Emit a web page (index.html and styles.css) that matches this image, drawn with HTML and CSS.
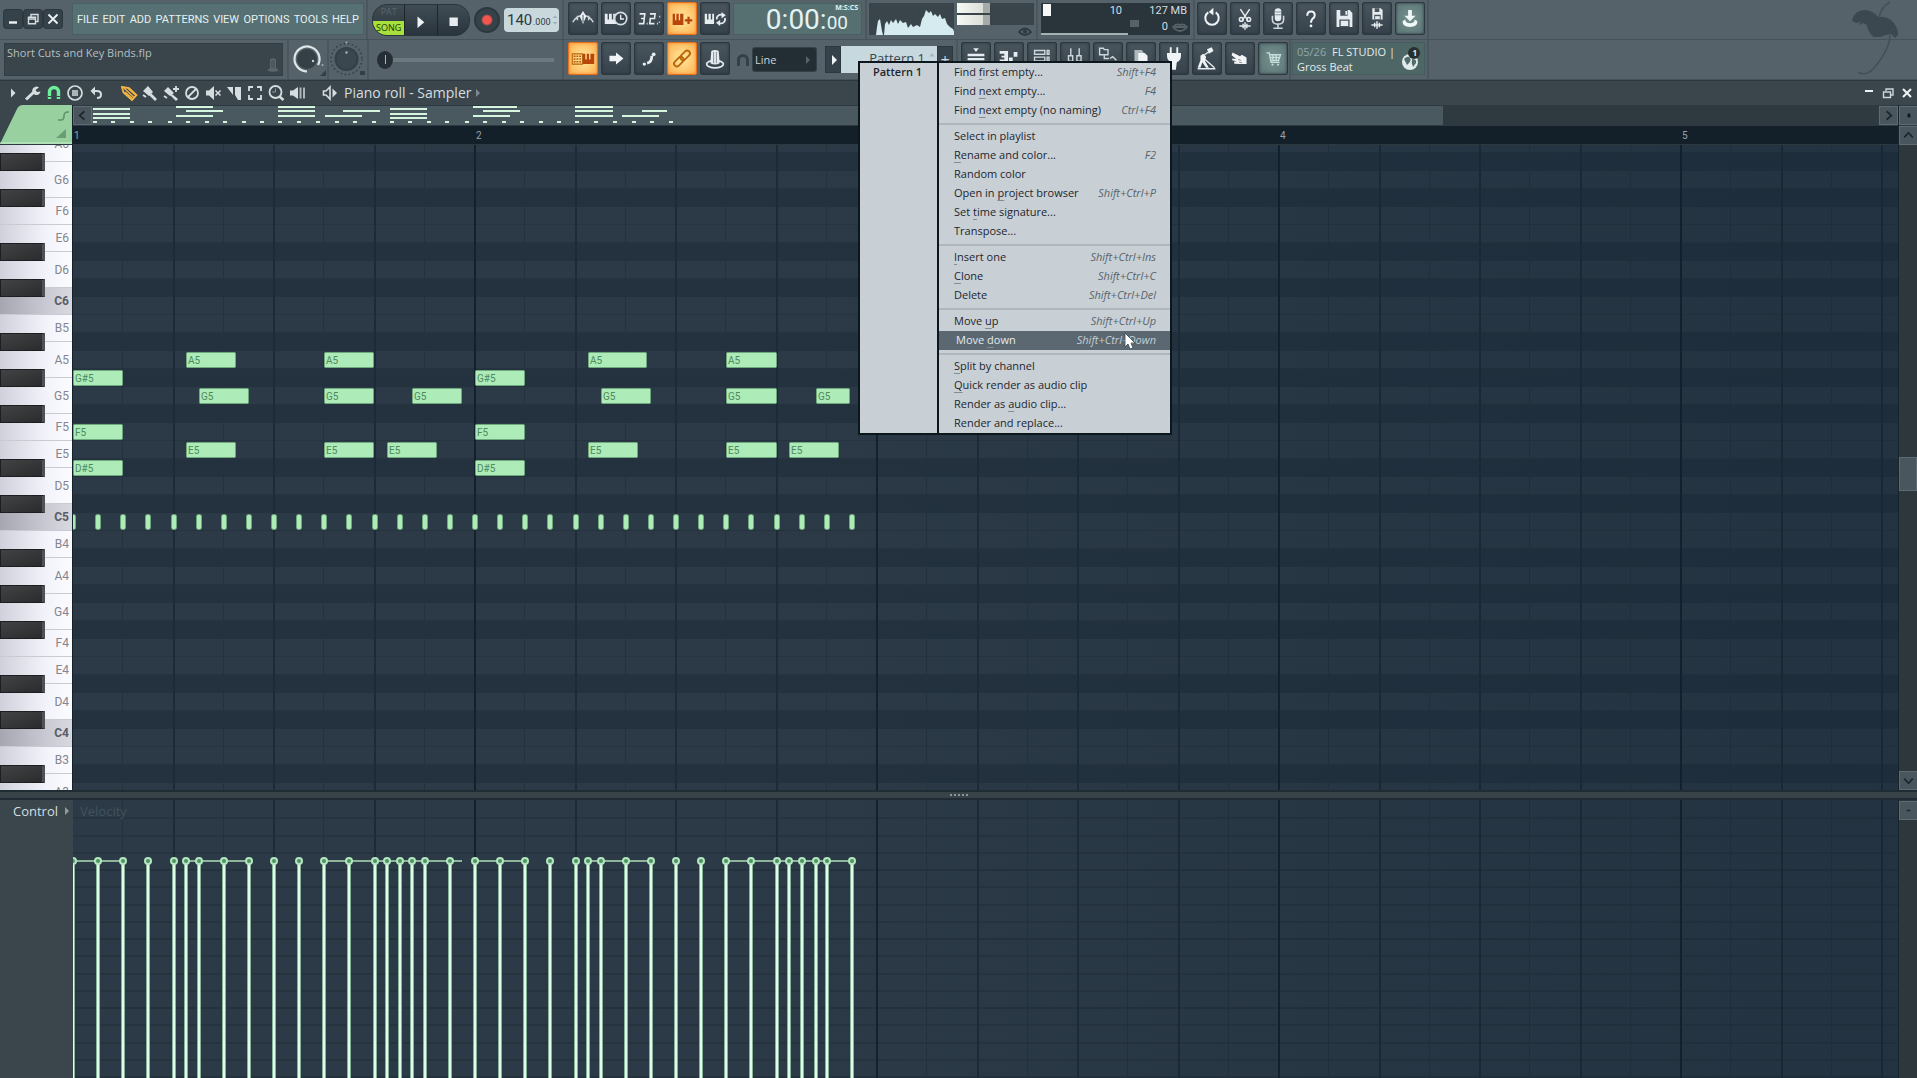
FILE: index.html
```html
<!DOCTYPE html>
<html lang="en">
<head>
    <meta charset="UTF-8">
    <meta name="viewport" content="width=device-width, initial-scale=1.0">
    <title>Short Cuts and Key Binds.flp</title>
    <link rel="stylesheet" href="styles.css">
</head>
<body>
    <header class="toolbar">
        <div class="toolbar-row">
            <div class="panel window-panel">
                <button class="win-button" aria-label="Minimize"><svg viewBox="0 0 18 18"><path d="M5 12.5h8" stroke="#eef3f5" stroke-width="2.4"/></svg></button>
                <button class="win-button" aria-label="Restore"><svg viewBox="0 0 18 18" fill="none" stroke="#d5dde0" stroke-width="1.4"><path d="M7 7V4.500h7v7h-2.500M4.500 7.200h7v6.500h-7zM4.500 9h7"/></svg></button>
                <button class="win-button" aria-label="Close"><svg viewBox="0 0 18 18"><path d="M4.500 4.500l9 9M13.500 4.500l-9 9" stroke="#eef3f5" stroke-width="1.800"/></svg></button>
            </div>
            <nav class="main-menu" aria-label="Main menu">
                <button>FILE</button><button>EDIT</button><button>ADD</button><button>PATTERNS</button><button>VIEW</button><button>OPTIONS</button><button>TOOLS</button><button>HELP</button>
            </nav>
            <div class="panel transport-panel">
                <div class="transport">
                    <button class="mode-button"><span class="mode-off">PAT</span><span class="mode-on">SONG</span></button>
                    <button aria-label="Play"><svg viewBox="0 0 30 32"><path d="M12 11l6.500 5.500L12 22z" fill="#f0f4f6"/></svg></button>
                    <button aria-label="Stop"><svg viewBox="0 0 30 32"><path d="M11 12h8v8h-8z" fill="#e6ecef"/></svg></button>
                </div>
                <button class="record" aria-label="Record"></button>
                <label class="tempo"><input type="text" value="140" aria-label="Tempo"><span>.000</span><svg viewBox="0 0 6 12"><path d="M0.500 4L3 1.500 5.500 4zM0.500 8L3 10.500 5.500 8z" fill="#9fb0b7"/></svg></label>
            </div>
            <div class="panel tool-panel">
                <div class="tool-group">
                    <button class="tool" aria-label="Metronome"><svg viewBox="0 0 30 32"><path d="M4 20c2-4 6-7 9-7M26 20c-2-4-6-7-9-7M9 13v5M21 13v5" fill="none" stroke="#cdd6da" stroke-width="1.600"/><path d="M15 8l3.500 5.500L15 22l-3.500-8.500z" fill="#f0f4f6"/><path d="M15 12v8" stroke="#3a464f"/></svg></button>
                    <button class="tool" aria-label="Wait for input"><svg viewBox="0 0 30 32"><path d="M3 11h3v6h1.500v-6h3v6H12v-6h3v11H3z" fill="#e6ecef"/><circle cx="20" cy="16" r="6.500" fill="#36424b" stroke="#d5dde0" stroke-width="1.800"/><path d="M20 12v4.500h3.500" fill="none" stroke="#e6ecef" stroke-width="1.500"/></svg></button>
                    <button class="tool" aria-label="Countdown"><svg viewBox="0 0 30 32" fill="none" stroke="#e6ecef" stroke-width="1.700"><path d="M5 11h5.500l-.6 5H6.500M9.900 16l-.6 5.500H4M12.500 21.500h1M16 11h5.500l-.6 5h-4.500l-.6 5.500h5M23.500 21.500h1"/><path d="M26 14h1M25.500 20h1"/></svg></button>
                    <button class="tool lit" aria-label="Overdub"><svg viewBox="0 0 30 32"><path d="M5 11h2.500v7H9v-7h2.500v7H13v-7h3.500v12H5z" fill="#b8460a"/><path d="M18 18h8M22 14v8" stroke="#b8460a" stroke-width="2.400"/></svg></button>
                    <button class="tool" aria-label="Loop record"><svg viewBox="0 0 30 32"><path d="M4 11h2.500v6H8v-6h2.500v6H12v-6h2v11H4z" fill="#e6ecef"/><path d="M17 17a4.300 4.300 0 0 1 6.500-4.500M25.500 15.500a4.300 4.300 0 0 1-6.500 5" fill="none" stroke="#e6ecef" stroke-width="1.800"/><path d="M22 9l4.500 3.500L22 16zM20.500 17.500L16 20.500l4.500 3.500z" fill="#e6ecef"/></svg></button>
                </div>
            </div>
            <div class="panel time-panel">
                <div class="time"><span class="time-main">0:00:</span><span class="time-sub">00</span><span class="time-unit">M:S:CS</span></div>
            </div>
            <div class="panel scope-panel">
                <svg class="scope" viewBox="0 0 85 32"><path d="M7 32l1-8 1-6 2-2 2 12 1 4zM15 32l1-11 2-3 2 4 2-5 2 3 3-4 2 5 2-4 3 3 3-1 2 6 3-4 2 3 4-2 3 2 2-8 2-3 2-6 3 3 2-2 2 5 2-2 3 3 2-3 2 5 3-1 2 6 3 3 3 2 2 5v4z" fill="#d5ebef"/></svg>
                <div class="meter"><div class="meter-bars"><i></i><i></i></div><svg viewBox="0 0 14 10"><path d="M1 5q6-7 12 0-6 6-12 0z" fill="none" stroke="#2f3a41" stroke-width="1.800"/><circle cx="7" cy="4.500" r="2" fill="#2f3a41"/></svg></div>
            </div>
            <div class="panel cpu-panel">
                <div class="cpu">
                    <div class="cpu-load"><i></i><span>10</span></div>
                    <div class="cpu-mem"><span>127 MB</span></div>
                    <div class="cpu-graph"></div>
                    <div class="cpu-voices"><i></i><span>0</span><svg viewBox="0 0 16 10"><path d="M1 5q3.500-4 7-2 3.500-2 7 2-3.500 4-7 4T1 5zM3 5h10" fill="none" stroke="#56626a" stroke-width="1.800"/></svg></div>
                </div>
            </div>
            <div class="panel file-panel">
                <div class="tool-group">
                    <button class="tool" aria-label="Undo"><svg viewBox="0 0 30 32"><path d="M19 9.500a7.200 7.200 0 1 1-8 0" fill="none" stroke="#f0f4f6" stroke-width="2.200"/><path d="M16.500 4.500v8l-5-3.500z" fill="#f0f4f6"/></svg></button>
                    <button class="tool" aria-label="Cut"><svg viewBox="0 0 30 32" fill="none" stroke="#e6ecef" stroke-width="1.600"><path d="M10 6l8 12M20 6l-8 12"/><circle cx="11" cy="17" r="2"/><circle cx="19" cy="17" r="2"/><path d="M9 24h12M13 21.500v5M17 21.500v5M15 20v8" stroke-width="1.500"/></svg></button>
                    <button class="tool" aria-label="Record audio"><svg viewBox="0 0 30 32"><rect x="11.500" y="5" width="7" height="14" rx="3.500" fill="#e6ecef"/><path d="M9 13v4q0 5 6 5t6-5v-4M15 22v4M10 26.500h10" fill="none" stroke="#cdd6da" stroke-width="1.700"/><path d="M12 9h6M12 12h6" stroke="#7c888f"/></svg></button>
                    <button class="tool" aria-label="Help"><svg viewBox="0 0 30 32"><path d="M11 13q0-4.500 4-4.500t4 4q0 2.500-2.500 4Q15 18 15 20.500" fill="none" stroke="#f0f4f6" stroke-width="2.200"/><circle cx="15" cy="24" r="1.500" fill="#f0f4f6"/></svg></button>
                    <button class="tool" aria-label="Save"><svg viewBox="0 0 30 32"><path d="M7 7h14l3 3v15H7z" fill="#e6ecef"/><path d="M11 7h8v6h-8zM10 17h11v8H10z" fill="#4a565e"/><path d="M16.500 8h2v4h-2zM11.500 18.500h8v5.500h-8z" fill="#e6ecef"/></svg></button>
                    <button class="tool" aria-label="Save new version"><svg viewBox="0 0 30 32"><path d="M10 5h9l2 2v10H10z" fill="#e6ecef"/><path d="M12.500 5h5v4h-5zM12 12h7v5h-7z" fill="#4a565e"/><path d="M13 13.500h5v3h-5z" fill="#e6ecef"/><path d="M9 23h12M12.500 20.500v5M17.500 20.500v5M15 19v8" stroke="#e6ecef" stroke-width="1.600"/></svg></button>
                    <button class="tool green" aria-label="Export"><svg viewBox="0 0 30 32"><path d="M13 7h4v6h4l-6 6-6-6h4z" fill="#f0f8f7"/><path d="M7 19q0 6 8 6t8-6l-3-2q0 4-5 4t-5-4z" fill="#f0f8f7"/></svg></button>
                </div>
            </div>
        </div>

        <div class="toolbar-row">
            <div class="panel hint-panel">
                <div class="hint"><span>Short Cuts and Key Binds.flp</span><svg viewBox="0 0 14 16"><path d="M4 2q3-1.500 6 0v9l3 2.500q-6 2.500-12 0L4 11z" fill="#59656b"/><path d="M6 3v8M8 3v8" stroke="#434e54"/></svg></div>
            </div>
            <div class="panel knob-panel"><svg viewBox="0 0 38 38"><circle cx="18" cy="19" r="10" fill="#343f46"/><path d="M29 25A12.500 12.500 0 1 0 18 31.500" fill="none" stroke="#dde6e9" stroke-width="2.200"/><circle cx="24" cy="21" r="1.200" fill="#c6d0d4"/><circle cx="33.500" cy="25" r="1" fill="#a5b0b5"/><path d="M31 36l6-6v6z" fill="#333e45"/></svg></div>
            <div class="panel knob-panel"><svg viewBox="0 0 38 38"><circle cx="17.500" cy="19" r="11" fill="#3b474e" stroke="#343f46" stroke-width="2"/><circle cx="17.500" cy="19" r="15.500" fill="none" stroke="#343f46" stroke-width="1.600" stroke-dasharray="1.500 2.600"/><circle cx="17.500" cy="12.500" r="1.200" fill="#a5b0b5"/><circle cx="17.500" cy="2.500" r="1" fill="#a5b0b5"/><path d="M31 31h5v4h-5z" fill="#333e45"/></svg></div>
            <div class="panel pitch-panel"><input type="range" min="0" max="100" value="0" aria-label="Song position"></div>
            <div class="panel tool-panel">
                <div class="tool-group">
                    <button class="tool lit" aria-label="Typing keyboard"><svg viewBox="0 0 30 32"><path d="M3.500 11h11v11h-11z" fill="none" stroke="#b8660a" stroke-width="1.200"/><path d="M5 13.500h8M5 16.500h8M5 19.500h8" stroke="#b8560a" stroke-width="1.600" stroke-dasharray="2 1"/><path d="M15 11h2.500v6H19v-6h2.500v6H23v-6h4v11H15z" fill="#b8460a"/></svg></button>
                    <button class="tool" aria-label="Forward"><svg viewBox="0 0 30 32"><path d="M8 13h7V9.500l8 6.500-8 6.500V19H8z" fill="#f0f4f6"/></svg></button>
                    <button class="tool" aria-label="Slide"><svg viewBox="0 0 30 32"><circle cx="10" cy="22" r="1.800" fill="#e6ecef"/><path d="M13 21q5-1 5-8" fill="none" stroke="#e6ecef" stroke-width="3"/><circle cx="20" cy="11.500" r="2" fill="#e6ecef"/></svg></button>
                    <button class="tool lit" aria-label="Link"><svg viewBox="0 0 30 32" fill="none" stroke="#b8660a" stroke-width="2"><rect x="12.500" y="10" width="12" height="6" rx="3" transform="rotate(-45 18 13)"/><rect x="5.500" y="16" width="12" height="6" rx="3" transform="rotate(-45 12 19)"/></svg></button>
                    <button class="tool" aria-label="Multilink"><svg viewBox="0 0 30 32"><ellipse cx="15" cy="22" rx="9" ry="4" fill="none" stroke="#e6ecef" stroke-width="1.800"/><path d="M11 8q4-2 8 0l1 13q-5 3-10 0z" fill="#e6ecef"/><path d="M13.500 9v12M16.500 9v12" stroke="#7c888f"/></svg></button>
                </div>
            </div>
            <div class="snap-panel">
                <svg viewBox="0 0 14 14"><path d="M2.500 13V7a4.500 4.500 0 0 1 9 0v6" fill="none" stroke="#353f46" stroke-width="3"/></svg>
                <label class="snap"><select aria-label="Snap"><option>Line</option></select><svg viewBox="0 0 6 10"><path d="M1 1l4 4-4 4z" fill="#56616a"/></svg></label>
            </div>
            <div class="panel pattern-panel">
                <button class="pattern-play" aria-label="Play pattern"><svg viewBox="0 0 6 10"><path d="M1 0l5 5-5 5z" fill="#f0f4f6"/></svg></button>
                <button class="pattern-name"><span>Pattern 1</span><svg viewBox="0 0 6 10"><path d="M0 3.500L3 0l3 3.500z" fill="#a8bac1"/></svg></button>
                <button class="pattern-add">+</button>
            </div>
            <div class="panel view-panel">
                <div class="tool-group">
                    <button class="tool" aria-label="Playlist"><svg viewBox="0 0 30 32"><path d="M12 5h6l-3 4zM6 11h18v2.500H6zM6 15.500h18V18H6z" fill="#e6ecef"/></svg></button>
                    <button class="tool" aria-label="Piano roll"><svg viewBox="0 0 30 32"><path d="M5 8h9v12H5v-3h5v-2H7v-2h3v-2H5zM15 15h4v4h-4zM20 9h4v5h-4z" fill="#e6ecef"/></svg></button>
                    <button class="tool" aria-label="Channel rack"><svg viewBox="0 0 30 32" fill="none" stroke="#cdd6da" stroke-width="1.500"><path d="M7 7.500h11v4H7zM7 14.500h11v4H7zM20.500 7.500h2v4h-2zM20.500 14.500h2v4h-2z"/></svg></button>
                    <button class="tool" aria-label="Mixer"><svg viewBox="0 0 30 32" fill="none" stroke="#cdd6da" stroke-width="1.500"><path d="M10.500 5v8M19.500 5v8M8 13h4.500v6H8zM17 13h4.500v6H17z"/></svg></button>
                    <button class="tool" aria-label="Browser"><svg viewBox="0 0 30 32" fill="none" stroke="#cdd6da" stroke-width="1.500"><path d="M6 5h4l1 1.500h4V12H6zM11 12v4h5M17 16l3-2 4 4"/></svg></button>
                    <button class="tool" aria-label="Plugin picker"><svg viewBox="0 0 30 32"><path d="M8 7h8l2 3v9H8z" fill="#aeb9be"/><path d="M12 10h7l3 3v10H12z" fill="#f0f4f6"/></svg></button>
                    <button class="tool" aria-label="Plugin database"><svg viewBox="0 0 30 32"><path d="M10.500 4h2v6h5V4h2v6h3v3q0 5-4.500 7l-1 8h-4l-1-8Q7.500 18 7.500 13v-3h3z" fill="#f0f4f6"/></svg></button>
                    <button class="tool" aria-label="Macros"><svg viewBox="0 0 30 32"><path d="M15 6l5-2 2 4-5 3z" fill="#f0f4f6"/><path d="M8 13l3-2 3 3-1 5 4 7h-3l-4-6-2 6H5l3-8z" fill="#f0f4f6"/><path d="M11 13l7-5M13 17l10 9M5 27h19" fill="none" stroke="#e6ecef" stroke-width="1.500"/></svg></button>
                    <button class="tool" aria-label="Touch controllers"><svg viewBox="0 0 30 32"><path d="M7 9.500l8 4 2-1.500 5 3v7h-7l-6-.5-.5-2 3-.5-5-1 .5-2 4 .5-5-4z" fill="#f0f4f6"/><path d="M13 17l3 1M14 20l3 .5" stroke="#7c888f"/></svg></button>
                    <button class="tool green" aria-label="Shop"><svg viewBox="0 0 30 32" fill="none" stroke="#c5dedc" stroke-width="1.500"><path d="M8 10h3l2 10h9M11 12h12l-2 6h-8M15 12v6M18.500 12v6M12 15h10"/><path d="M13.500 22.500h2M19.500 22.500h2" stroke-width="2"/></svg></button>
                </div>
            </div>
            <div class="panel news-panel">
                <a class="news" href="#"><span><em>05/26</em> FL STUDIO | Gross Beat</span><svg viewBox="0 0 20 24"><circle cx="9" cy="15" r="8" fill="#e0ecec"/><path d="M3 12q4-4 6-1t-3 7zM11 12q5 0 4 4l-3 4q-2-4-1-8z" fill="#546b6b"/><circle cx="13" cy="6" r="6" fill="#26312f"/></svg><b>1</b></a>
            </div>
        </div>

        <svg class="fruit" viewBox="0 0 50 76"><path d="M2 21q1-8 9-10.500Q21 8.500 28 17q7-1.500 13 3 7 6 7 15l-3 3-4-4q-7 1-11 3h-6q-6-4-7-12l-4-2-5 2 3-3-5 1z" fill="#3c484f"/><path d="M40 2Q31 7 29 18M40 35q0 14-16 33-8 9-16 4" fill="none" stroke="#444f56" stroke-width="1.600"/></svg>
    </header>

    <section class="editor-bar">
        <div class="editor-tools">
            <button aria-label="Menu"><svg viewBox="0 0 20 20"><path d="M9 5.500l4.500 4.500L9 14.500z" fill="#d5dde0"/></svg></button>
            <button aria-label="Tools"><svg viewBox="0 0 20 20"><path d="M3 16.500L11 9" stroke="#d5dde0" stroke-width="3"/><path d="M16 4.500a4.200 4.200 0 1 0 1.500 4l-3.500.5-1.500-2z" fill="#d5dde0"/></svg></button>
            <button aria-label="Snap"><svg viewBox="0 0 20 20"><path d="M5.500 16V9a4.500 4.500 0 0 1 9 0v7" fill="none" stroke="#6cf09a" stroke-width="3.400"/><path d="M4 13.500h3.500M12.500 13.500H16" stroke="#39464b"/></svg></button>
            <button aria-label="Stamp"><svg viewBox="0 0 20 20"><circle cx="10" cy="10" r="7" fill="none" stroke="#d5dde0" stroke-width="1.700"/><path d="M7 7h6v6H7z" fill="#aab4b9"/></svg></button>
            <button aria-label="Undo"><svg viewBox="0 0 20 20"><path d="M8 8h3q4 0 4 3.500T11 15" fill="none" stroke="#d5dde0" stroke-width="2"/><path d="M9 3.500v9L4.500 8z" fill="#d5dde0"/></svg></button>
        </div>
        <div class="editor-tools">
            <button aria-label="Draw"><svg viewBox="0 0 20 20"><path d="M3 4l7 1 7.500 7-4.500 5L4.500 9.500z" fill="none" stroke="#f5b545" stroke-width="1.800"/><path d="M5 5l10 9.500M9 5.500l8 7M6 9l8 7" stroke="#f5b545" stroke-width="1.400"/></svg></button>
            <button aria-label="Paint"><svg viewBox="0 0 20 20"><path d="M3 8l5-5 5 6-4 4zM11 10l6 6-2 2-6-6z" fill="#d5dde0"/><path d="M3 12l3 2" stroke="#d5dde0" stroke-width="2"/></svg></button>
            <button aria-label="Paint drums"><svg viewBox="0 0 20 20"><path d="M3 8l4-4 6 6-4 3zM11 11l6 5-2 2-6-6z" fill="#d5dde0"/><path d="M3 13l3 2M15 3v6M12 6h6" stroke="#d5dde0" stroke-width="1.800"/></svg></button>
            <button aria-label="Delete"><svg viewBox="0 0 20 20" fill="none" stroke="#d5dde0" stroke-width="1.800"><circle cx="10" cy="10" r="6"/><path d="M6 14l8-8"/></svg></button>
            <button aria-label="Mute"><svg viewBox="0 0 20 20"><path d="M3 7.500h3L11 3v14l-5-4.500H3z" fill="#d5dde0"/><path d="M12.500 7.500l5 5M17.500 7.500l-5 5" stroke="#d5dde0" stroke-width="1.600"/></svg></button>
            <button aria-label="Slice"><svg viewBox="0 0 20 20"><path d="M3 4h6v8zM11 4h6v13h-3l-3-5z" fill="#d5dde0"/></svg></button>
            <button aria-label="Select"><svg viewBox="0 0 20 20"><path d="M4 8V4h4M12 4h4v4M16 12v4h-4M8 16H4v-4" fill="none" stroke="#d5dde0" stroke-width="1.800"/></svg></button>
            <button aria-label="Zoom"><svg viewBox="0 0 20 20"><circle cx="9.500" cy="9" r="6" fill="none" stroke="#d5dde0" stroke-width="1.800"/><path d="M13.500 13.500l4 3.500" stroke="#d5dde0" stroke-width="2.600"/><path d="M9.500 5.500V9H6" fill="none" stroke="#8d989e"/></svg></button>
            <button aria-label="Playback"><svg viewBox="0 0 20 20"><path d="M3 7.500h3L11 4v12l-5-3.500H3z" fill="#d5dde0"/><path d="M13.500 4.500v11M17 4.500v11" stroke="#aab4b9" stroke-width="2"/></svg></button>
        </div>
        <div class="editor-title">
            <svg viewBox="0 0 20 20"><path d="M3.500 8h2.500l4-4v12l-4-4H3.500z" fill="none" stroke="#d5dde0" stroke-width="1.600"/><path d="M12.500 5.500L17 10l-4.500 4.500z" fill="#d5dde0"/></svg>
            <h1>Piano roll - Sampler</h1>
            <svg class="caret" viewBox="0 0 6 10"><path d="M1 1l4 4-4 4z" fill="#7e8a90"/></svg>
        </div>
        <div class="editor-window">
            <button aria-label="Minimize"><svg viewBox="0 0 16 16"><path d="M4 6h8" stroke="#eef3f5" stroke-width="2"/></svg></button>
            <button aria-label="Restore"><svg viewBox="0 0 16 16" fill="none" stroke="#cdd6da" stroke-width="1.400"><path d="M6 6V4h7v6h-2M3.500 7h7v5.500h-7z"/></svg></button>
            <button aria-label="Close"><svg viewBox="0 0 16 16"><path d="M4 4l8 8M12 4l-8 8" stroke="#eef3f5" stroke-width="2"/></svg></button>
        </div>
    </section>

    <main class="editor">
        <div class="upper">
            <div class="keys-column">
                <svg class="corner" viewBox="0 0 72 39"><path d="M0 39L17 4q2-4 6-4h49v39z" fill="#98d19f"/><path d="M0 38h72" stroke="#c9efd0"/><path d="M58 15h3q3 0 3-4t4-4h1" fill="none" stroke="#5f9569" stroke-width="1.600"/><path d="M56 33l10-9v9z" fill="#6a9d73"/></svg>
                <div class="keys" id="keys"></div>
            </div>
            <div class="roll-column">
                <div class="overview">
                    <button aria-label="Scroll left"><svg viewBox="0 0 18 18"><path d="M11 4.500L6 9l5 4.500" fill="none" stroke="#1b262d" stroke-width="1.800"/></svg></button>
                    <svg id="overview"></svg>
                    <div class="overview-rest"></div>
                    <button aria-label="Scroll right"><svg viewBox="0 0 18 18"><path d="M7 4.500l5 4.500-5 4.500" fill="none" stroke="#1b262d" stroke-width="1.800"/></svg></button>
                </div>
                <div class="ruler" id="ruler"></div>
                <svg class="roll" id="roll"></svg>
            </div>
            <div class="scrollbar">
                <button aria-label="Options"><svg viewBox="0 0 18 18"><path d="M8 7h3v4H8z" fill="#10181d"/></svg></button>
                <button aria-label="Scroll up"><svg viewBox="0 0 18 18"><path d="M4.500 11l4.500-5 4.500 5" fill="none" stroke="#1b262d" stroke-width="1.800"/></svg></button>
                <div class="track"><div class="thumb"></div></div>
                <button aria-label="Scroll down"><svg viewBox="0 0 18 18"><path d="M4.500 7l4.500 5 4.500-5" fill="none" stroke="#1b262d" stroke-width="1.800"/></svg></button>
            </div>
        </div>
        <div class="splitter"><svg viewBox="0 0 20 4"><path d="M1 2h18" stroke="#8d989e" stroke-width="2" stroke-dasharray="2 2"/></svg></div>
        <div class="lower">
            <button class="control-label">Control<svg viewBox="0 0 6 10"><path d="M1 1l4 4-4 4z" fill="#929da2"/></svg></button>
            <div class="velocity">
                <span>Velocity</span>
                <svg id="velocity"></svg>
            </div>
            <div class="scrollbar"><button aria-label="Collapse"><svg viewBox="0 0 18 18"><path d="M7 9h4" stroke="#1b262d" stroke-width="1.600"/></svg></button></div>
        </div>
    </main>

    <div class="pattern-menu">
        <div class="pattern-list"><button>Pattern 1</button></div>
        <div class="pattern-actions">
            <button>Find <u>f</u>irst empty...<kbd>Shift+F4</kbd></button>
            <button>Find <u>n</u>ext empty...<kbd>F4</kbd></button>
            <button>Find <u>n</u>ext empty (no naming)<kbd>Ctrl+F4</kbd></button>
            <hr>
            <button>Select in playlist</button>
            <button><u>R</u>ename and color...<kbd>F2</kbd></button>
            <button>Random color</button>
            <button>Open in <u>p</u>roject browser<kbd>Shift+Ctrl+P</kbd></button>
            <button>Set <u>t</u>ime signature...</button>
            <button>Transpose...</button>
            <hr>
            <button><u>I</u>nsert one<kbd>Shift+Ctrl+Ins</kbd></button>
            <button><u>C</u>lone<kbd>Shift+Ctrl+C</kbd></button>
            <button>Delete<kbd>Shift+Ctrl+Del</kbd></button>
            <hr>
            <button>Move <u>u</u>p<kbd>Shift+Ctrl+Up</kbd></button>
            <button class="active">Move <u>d</u>own<kbd>Shift+Ctrl+Down</kbd></button>
            <hr>
            <button><u>S</u>plit by channel</button>
            <button><u>Q</u>uick render as audio clip</button>
            <button>Render as <u>a</u>udio clip...</button>
            <button>Render and replace...</button>
        </div>
        <svg class="cursor" viewBox="0 0 12 18"><path d="M1 1v14l3-3 2 5 3-1-2-5h4z" fill="#fff" stroke="#3a464f" stroke-width=".8"/></svg>
    </div>

    <script src="script.js"></script>
</body>
</html>
```
FILE: styles.css
```css
* {
    margin: 0;
    padding: 0;
    box-sizing: border-box;
}

body {
    font-family: 'Open Sans', 'Noto Sans', sans-serif;
    background-color: #3a464b;
    color: #d5dde0;
    height: 100vh;
    display: flex;
    flex-direction: column;
    overflow: hidden;
}

button {
    font: inherit;
    color: inherit;
    background: none;
    border: none;
}

svg {
    display: block;
}

/* Top toolbar */
.toolbar {
    position: relative;
    height: 81px;
    flex: none;
    background: #566269;
    border-bottom: 2px solid #2c373e;
}

.toolbar-row {
    display: flex;
    height: 40px;
    border-bottom: 1px solid #465259;
}

.panel {
    display: flex;
    align-items: flex-start;
    flex: none;
    padding: 2px 4px;
    border-right: 2px solid #4b575e;
}

.window-panel {
    gap: 2px;
    padding-top: 10px;
    border: none;
}

.win-button {
    width: 18px;
    height: 18px;
    border-radius: 3px;
    background: #36424a;
    box-shadow: 0 0 0 1px #2c373e;
}

.main-menu {
    display: flex;
    flex: none;
    justify-content: space-between;
    align-items: center;
    width: 292px;
    height: 32px;
    margin: 3px 2px 0 6px;
    padding: 0 4px;
    background: #577073;
    border: 1px solid #48605f;
    font-family: Roboto, sans-serif;
    font-size: 11px;
    color: #e6f0f0;
}

.transport-panel {
    border-left: 2px solid #4b575e;
    align-items: center;
    gap: 4px;
    width: 198px;
    padding-right: 3px;
}

.transport {
    display: flex;
    flex: none;
    gap: 1px;
    width: 98px;
    height: 32px;
    border-radius: 15px;
    overflow: hidden;
    background: #1d262c;
    border: 1px solid #2a343b;
}

.transport button {
    flex: 1;
    background: linear-gradient(#414d55, #29343c);
}

.transport .mode-button {
    display: flex;
    flex-direction: column;
    font-size: 9px;
    line-height: 14px;
    text-align: center;
    color: #59656c;
}

.mode-on {
    flex: 1;
    width: 100%;
    background: #a8e03c;
    color: #22350a;
}

.mode-off {
    width: 100%;
    height: 16px;
}

.record {
    flex: none;
    width: 26px;
    height: 26px;
    border-radius: 50%;
    background: radial-gradient(circle, #f2564e 4px, #36424a 6px);
    border: 2px solid #2c373e;
}

.tempo {
    display: flex;
    flex: none;
    align-items: baseline;
    width: 55px;
    height: 24px;
    padding: 0 1px 0 3px;
    border-radius: 4px;
    background: #c9d8dd;
    color: #2b3a42;
    font-family: Roboto, sans-serif;
    font-size: 9px;
    line-height: 24px;
}

.tempo input {
    width: 26px;
    border: none;
    background: none;
    font: inherit;
    font-size: 15px;
    line-height: 24px;
    color: inherit;
}

.tempo svg {
    flex: none;
    width: 6px;
    height: 12px;
    margin-left: auto;
    align-self: center;
}

.tool-group {
    display: flex;
    gap: 3px;
}

.tool {
    width: 30px;
    height: 33px;
    border: 1px solid #2c373e;
    border-radius: 2px;
    background: linear-gradient(#4a565e, #36424b);
    box-shadow: inset 0 0 3px #28333b;
}

.tool svg {
    width: 28px;
    height: 31px;
}

.tool.lit {
    background: radial-gradient(#ffe9a0, #ffb04e);
    border-color: #e8701c;
    box-shadow: inset 0 0 3px #f08028;
}

.tool.green {
    background: radial-gradient(#76918f, #5a7474);
}

.tool-panel {
    padding-right: 3px;
    border: none;
}

.file-panel {
    padding-left: 2px;
    padding-right: 2px;
}

.view-panel {
    padding-left: 3px;
    padding-right: 1px;
}

.time-panel {
    padding: 3px 3px 0 0;
}

.time {
    position: relative;
    display: flex;
    align-items: baseline;
    justify-content: flex-end;
    width: 129px;
    height: 32px;
    padding-right: 13px;
    background: #566f70;
    border: 1px solid #48605f;
    color: #e3f3f2;
    font-family: Roboto, sans-serif;
    font-size: 28px;
    line-height: 32px;
}

.time-sub {
    font-size: 19px;
}

.time-unit {
    position: absolute;
    top: 0;
    right: 3px;
    font-family: 'Open Sans', sans-serif;
    font-size: 7px;
    font-weight: 700;
    line-height: 8px;
}

.scope-panel {
    gap: 3px;
    padding: 3px 2px;
}

.scope {
    width: 85px;
    height: 32px;
    background: #39444b;
}

.meter {
    display: flex;
    flex-direction: column;
    align-items: flex-end;
    gap: 2px;
}

.meter svg {
    width: 14px;
    height: 10px;
    margin-right: 2px;
}

.meter-bars {
    display: flex;
    flex-direction: column;
    gap: 2px;
    width: 77px;
    height: 22px;
    background: #39444b;
}

.meter-bars i {
    width: 33px;
    height: 10px;
    background: linear-gradient(90deg, #f6f8f4, #dcdfd8 80%, #a5aba7 80%);
}

.cpu-panel {
    padding: 3px 3px 0;
}

.cpu {
    display: grid;
    grid-template-columns: 87px 62px;
    grid-template-rows: 16px 16px;
    background: #2a343b;
    font-family: Roboto, sans-serif;
    font-size: 11px;
    line-height: 16px;
    text-align: right;
}

.cpu-load {
    display: flex;
    justify-content: space-between;
    padding: 0 6px 0 2px;
}

.cpu-load i {
    width: 8px;
    height: 12px;
    margin-top: 1px;
    background: #f6f8f8;
}

.cpu-mem {
    padding-right: 3px;
}

.cpu-graph {
    border-bottom: 2px solid #a5b0b5;
}

.cpu-voices {
    display: flex;
    align-items: center;
    gap: 4px;
    padding-right: 2px;
}

.cpu-voices i {
    width: 9px;
    height: 7px;
    margin: 0 auto 8px 2px;
    background: #56626a;
}

.cpu-voices svg {
    width: 16px;
    height: 10px;
}

.hint-panel {
    width: 289px;
    padding-top: 3px;
}

.hint {
    display: flex;
    justify-content: space-between;
    align-items: flex-end;
    width: 281px;
    height: 33px;
    padding: 1px 2px 2px;
    background: #39444b;
    border: 1px solid #323d44;
    font-size: 11px;
    line-height: 15px;
    color: #b5bfc4;
}

.hint span {
    align-self: flex-start;
}

.hint svg {
    width: 14px;
    height: 16px;
}

.knob-panel {
    width: 40px;
    padding: 0;
}

.knob-panel svg {
    width: 38px;
    height: 38px;
}

.pitch-panel {
    width: 195px;
    padding: 0 8px;
    align-items: center;
}

.pitch-panel input {
    width: 177px;
    height: 20px;
    appearance: none;
    background: linear-gradient(#6d7980, #6d7980) center / 100% 4px no-repeat;
}

.pitch-panel input::-webkit-slider-thumb {
    appearance: none;
    width: 16px;
    height: 18px;
    border-radius: 50%;
    background: linear-gradient(#a8c85a, #a8c85a) center / 1px 9px no-repeat, #242e34;
}

.snap-panel {
    display: flex;
    flex: none;
    align-items: center;
    gap: 3px;
    padding: 0 5px 0 3px;
}

.snap-panel > svg {
    width: 14px;
    height: 14px;
}

.snap {
    display: flex;
    align-items: center;
    width: 63px;
    height: 23px;
    padding: 0 5px 0 2px;
    background: #232d34;
    border-radius: 2px;
    box-shadow: 0 0 0 1px #35414a;
}

.snap select {
    flex: 1;
    appearance: none;
    border: none;
    background: none;
    color: #cdd6da;
    font: 11px 'Open Sans', sans-serif;
}

.snap svg,
.pattern-play svg,
.pattern-name svg {
    width: 6px;
    height: 10px;
}

.pattern-panel {
    padding: 6px 3px 0 4px;
}

.pattern-play,
.pattern-add {
    width: 16px;
    height: 27px;
    padding-left: 5px;
    background: #36424b;
    border: 1px solid #2c373e;
}

.pattern-add {
    padding: 0;
}

.pattern-name {
    display: flex;
    align-items: center;
    justify-content: flex-end;
    gap: 4px;
    width: 96px;
    height: 27px;
    padding: 0 2px 4px 0;
    background: #c8d8df;
    color: #37464f;
    font-size: 13px;
    line-height: 18px;
}

.news {
    position: relative;
    display: flex;
    justify-content: space-between;
    align-items: center;
    width: 133px;
    height: 33px;
    padding: 0 3px 0 4px;
    background: #4f6667;
    border: 1px solid #455c5c;
    color: #e0eceb;
    font-size: 11px;
    line-height: 15px;
    text-decoration: none;
}

.news-panel {
    padding-left: 1px;
    padding-right: 2px;
}

.news em {
    font-style: normal;
    color: #93a7a7;
    margin-right: 3px;
}

.news svg {
    width: 20px;
    height: 24px;
    flex: none;
}

.news b {
    position: absolute;
    top: 4px;
    right: 7px;
    font-size: 8px;
    line-height: 12px;
}

.fruit {
    position: absolute;
    top: 0;
    right: 17px;
    width: 50px;
    height: 76px;
}

/* Piano roll title bar */
.editor-bar {
    display: flex;
    align-items: center;
    flex: none;
    height: 24px;
    padding: 0 2px;
    background: #3a464b;
}

.editor-tools {
    display: flex;
    gap: 1px;
    margin-right: 13px;
}

.editor-tools button {
    width: 20px;
    height: 20px;
}

.editor-title {
    display: flex;
    align-items: center;
    gap: 4px;
}

.editor-title svg {
    width: 20px;
    height: 20px;
}

.editor-title .caret {
    width: 6px;
    height: 10px;
}

.editor-title h1 {
    font-size: 14px;
    font-weight: 400;
    line-height: 18px;
}

.editor-window {
    display: flex;
    gap: 3px;
    margin-left: auto;
}

.editor-window button {
    width: 16px;
    height: 16px;
}

/* Editor body */
.editor {
    flex: 1;
    min-height: 0;
    display: flex;
    flex-direction: column;
}

.upper {
    flex: 1;
    min-height: 0;
    display: flex;
}

.keys-column {
    width: 73px;
    display: flex;
    flex-direction: column;
    border-right: 1px solid #14202a;
    background: #3a464b;
}

.corner {
    width: 72px;
    height: 39px;
    flex: none;
}

.keys {
    flex: 1;
    overflow: hidden;
    border-top: 1px solid #2c373e;
}

/* The list starts part-way through the top key */
.keys .key:first-child {
    margin-top: -19px;
}

.key {
    position: relative;
    display: flex;
    align-items: center;
    justify-content: flex-end;
    height: 36px;
    padding-right: 3px;
    background: linear-gradient(90deg, #cfd0da, #f3f4fb 65%, #fbfbff);
    border-bottom: 1px solid #c9cad2;
    color: #83858f;
    font-family: Roboto, sans-serif;
    font-size: 12px;
}

.key.short {
    height: 27px;
}

.key.c {
    background: linear-gradient(90deg, #a5a6af, #c9cad3 65%, #d8d9e0);
    color: #5b5d66;
    font-weight: 700;
}

.key i {
    position: absolute;
    left: 0;
    bottom: -10px;
    z-index: 1;
    width: 45px;
    height: 18px;
    background: linear-gradient(160deg, #424345, #2a2b2d);
    border: 1px solid #1d1e20;
    border-right: 3px solid #505154;
}

.roll-column {
    flex: 1;
    min-width: 0;
    display: flex;
    flex-direction: column;
}

.overview {
    display: flex;
    flex: none;
    height: 21px;
    padding: 1px 0;
    background: #2e3940;
}

.overview button,
.scrollbar button {
    flex: none;
    width: 19px;
    height: 19px;
    background: #4a565d;
    border: 1px solid #5f6b72;
}

.overview > svg {
    width: 74%;
    height: 19px;
    background: #4a5860;
}

.overview-rest {
    flex: 1;
}

.overview button svg,
.scrollbar button svg {
    width: 17px;
    height: 17px;
}

.ruler {
    display: flex;
    flex: none;
    height: 19px;
    overflow: hidden;
    background: #13202a;
    border-bottom: 1px solid #2c373e;
    color: #98a3a9;
    font: 10px/20px Roboto, sans-serif;
}

.ruler span {
    flex: none;
    width: 402px;
    padding-left: 1px;
}

.roll,
.velocity svg {
    flex: 1;
    min-height: 0;
    width: 100%;
    height: 100%;
    background: #2c3a47;
}

.row-dark { fill: #24323f; }
.row-line { fill: #263440; }
.line-step { fill: #24323e; }
.line-beat { fill: #1c2b37; }
.line-bar { fill: #13212c; }

.note {
    fill: #adebb9;
    stroke: #6fa87c;
}

.note-label {
    fill: #4e8a5b;
    font: 10px Roboto, sans-serif;
}

.mini { fill: #d5f5df; }

.stem { fill: #86b398; }
.stem-core { fill: #dffbea; }
.length { fill: #8db59c; }

.handle {
    fill: #4b9260;
    stroke: #b3e6c0;
    stroke-width: 2;
}

.scrollbar {
    width: 19px;
    flex: none;
    display: flex;
    flex-direction: column;
    background: #2e373c;
    border-left: 1px solid #18242b;
    padding-top: 1px;
    gap: 1px;
}

.track {
    flex: 1;
    display: flex;
    flex-direction: column;
    padding-top: 311px;
}

.thumb {
    height: 34px;
    background: #4a565d;
    border: 1px solid #5f6b72;
}

.splitter {
    display: flex;
    align-items: center;
    justify-content: center;
    flex: none;
    height: 10px;
    background: #374347;
    border: 2px solid #202c33;
    border-width: 2px 0;
}

.splitter svg {
    width: 20px;
    height: 4px;
}

.lower {
    flex: none;
    height: 278px;
    display: flex;
}

.control-label {
    display: flex;
    flex: none;
    align-items: center;
    justify-content: flex-end;
    gap: 6px;
    width: 73px;
    height: 22px;
    padding-right: 3px;
    font-size: 13px;
}

.control-label svg {
    width: 6px;
    height: 10px;
}

.velocity {
    position: relative;
    flex: 1;
    min-width: 0;
}

.velocity span {
    position: absolute;
    top: 2px;
    left: 7px;
    font-size: 13px;
    line-height: 18px;
    color: #42525e;
}

/* Pattern drop-down */
.pattern-menu {
    position: absolute;
    top: 61px;
    left: 858px;
    z-index: 10;
    display: flex;
    width: 314px;
    background: #c8d0d6;
    border: 2px solid #0c171d;
    color: #1d262c;
    font-size: 11px;
}

.pattern-list {
    width: 79px;
    border-right: 2px solid #0c171d;
}

.pattern-list button {
    width: 100%;
    padding-right: 2px;
    font-weight: 600;
    line-height: 18px;
}

.pattern-actions {
    flex: 1;
}

.pattern-actions button {
    display: flex;
    width: 100%;
    height: 19px;
    padding: 0 14px 0 15px;
    line-height: 18px;
    white-space: pre;
}

.pattern-actions .active {
    background: #5b6871;
    color: #e3eaee;
    padding-left: 17px;
}

.pattern-actions u {
    text-decoration-color: #828d94;
    text-decoration-thickness: 1px;
    text-underline-offset: 3px;
}

.pattern-actions kbd {
    margin-left: auto;
    font-family: inherit;
    font-style: italic;
    color: #59646c;
}

.pattern-actions .active kbd {
    color: #c3cdd3;
}

.pattern-actions hr {
    height: 7px;
    border: none;
    background: linear-gradient(#adb7bd, #adb7bd) 0 3px / 100% 2px no-repeat;
}

.cursor {
    position: absolute;
    left: 264px;
    top: 269px;
    width: 12px;
    height: 18px;
}
```
FILE: script.js
```js
const BAR = 402;
const ROW = 18;
const NOTE_NAMES = ['C', 'C#', 'D', 'D#', 'E', 'F', 'F#', 'G', 'G#', 'A', 'A#', 'B'];
const TOP_PITCH = 6 * 12 + 9; // A6
const TOP_OFFSET = -10;

// [pitch, start, length] in pixels from the first bar
const notes = [
    ['G#5', 0, 50], ['F5', 0, 50], ['D#5', 0, 50],
    ['A5', 113, 50], ['E5', 113, 50], ['G5', 126, 50],
    ['A5', 251, 50], ['G5', 251, 50], ['E5', 251, 50],
    ['E5', 314, 50], ['G5', 339, 50],
    ['G#5', 402, 50], ['F5', 402, 50], ['D#5', 402, 50],
    ['A5', 515, 59], ['E5', 515, 50], ['G5', 528, 50],
    ['A5', 653, 51], ['G5', 653, 51], ['E5', 653, 51],
    ['E5', 716, 50], ['G5', 743, 34]
];

const hits = [];
for (let i = 0; i < 32; i++) {
    hits.push(Math.round(i * BAR / 16));
}

function pitchOf(name) {
    return parseInt(name.slice(-1)) * 12 + NOTE_NAMES.indexOf(name.slice(0, -1));
}

function rect(x, y, w, h, cls, rx) {
    return `<rect x="${x}" y="${y}" width="${w}" height="${h}" class="${cls}"${rx ? ` rx="${rx}"` : ''}/>`;
}

function barLines() {
    let out = '';
    for (let i = 1; i < 80; i++) {
        const cls = i % 8 === 0 ? 'line-bar' : i % 2 === 0 ? 'line-beat' : 'line-step';
        out += rect(Math.round(i * BAR / 8) - 1, 0, i % 2 === 0 ? 2 : 1, 2000, cls);
    }
    return out;
}

// Darkens the far end of the grid
function shade(id) {
    return `<defs><linearGradient id="${id}"><stop offset=".35" stop-color="#0c2030" stop-opacity="0"/>` +
        `<stop offset="1" stop-color="#0c2030" stop-opacity=".28"/></linearGradient></defs>` +
        `<rect width="100%" height="100%" fill="url(#${id})"/>`;
}

function drawKeys() {
    let out = '';
    for (let p = TOP_PITCH; p > 3 * 12; p--) {
        const name = NOTE_NAMES[p % 12];
        if (name.length > 1) continue;
        const short = 'BFEC'.includes(name) ? ' short' : '';
        const black = 'CF'.includes(name) ? '' : '<i></i>';
        out += `<div class="key${short}${name === 'C' ? ' c' : ''}">${name}${Math.floor(p / 12)}${black}</div>`;
    }
    document.getElementById('keys').innerHTML = out;
}

function drawRoll() {
    let out = '';
    for (let i = 0; i < 90; i++) {
        const name = NOTE_NAMES[(TOP_PITCH - i + 120) % 12];
        const y = TOP_OFFSET + i * ROW;
        if (name.length > 1) {
            out += rect(0, y, '100%', ROW, 'row-dark');
        } else {
            out += rect(0, y + ROW - 1, '100%', 1, 'row-line');
        }
    }
    out += barLines() + shade('rollShade');

    notes.forEach(([name, start, length]) => {
        const y = TOP_OFFSET + (TOP_PITCH - pitchOf(name)) * ROW;
        out += rect(start + 0.5, y + 1.5, length - 1, 15, 'note', 1);
        out += `<text x="${start + 2}" y="${y + 13}" class="note-label">${name}</text>`;
    });
    const hitY = TOP_OFFSET + (TOP_PITCH - pitchOf('C5')) * ROW;
    hits.forEach(x => {
        out += rect(x - 2.5, hitY + 1.5, 5, 15, 'note', 2);
    });
    document.getElementById('roll').innerHTML = out;
}

function drawOverview() {
    let out = '';
    const scale = 297 / BAR;
    notes.forEach(([name, start, length]) => {
        const y = Math.round((pitchOf('A5') - pitchOf(name)) * 1.75);
        out += rect(Math.round(start * scale) + 1, y, Math.round(length * scale), 2, 'mini');
    });
    hits.forEach(x => {
        out += rect(Math.round(x * scale) + 1, 15, 4, 2, 'mini');
    });
    document.getElementById('overview').innerHTML = out;
}

function drawVelocity() {
    let out = '';
    for (let i = 1; i < 17; i++) {
        out += rect(0, Math.round(i * 17.25), '100%', 2, i % 4 === 0 ? 'line-step' : 'row-line');
    }
    out += barLines() + shade('velocityShade');

    [[0, 50], [113, 176], [251, 389], [402, 452], [515, 578], [653, 779]].forEach(([from, to]) => {
        out += rect(from, 60, to - from, 2, 'length');
    });
    const stems = [...new Set([...hits, 113, 314, 339, 515, 716, 743])].sort((a, b) => a - b);
    stems.forEach(x => {
        out += rect(x - 2, 61, 4, 300, 'stem') + rect(x - 1, 61, 2, 300, 'stem-core');
        out += `<circle cx="${x}" cy="61" r="3" class="handle"/>`;
    });
    document.getElementById('velocity').innerHTML = out;
}

function drawRuler() {
    let out = '';
    for (let i = 1; i < 12; i++) {
        out += `<span>${i}</span>`;
    }
    document.getElementById('ruler').innerHTML = out;
}

drawKeys();
drawRuler();
drawOverview();
drawRoll();
drawVelocity();
```
